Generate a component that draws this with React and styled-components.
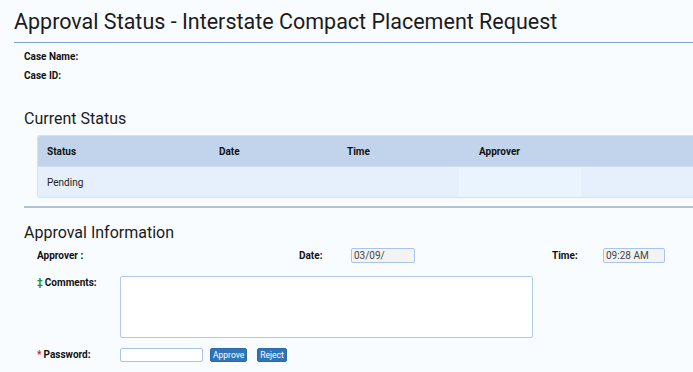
import React from "react";
import styled, { createGlobalStyle } from "styled-components";

const GlobalStyle = createGlobalStyle`
	html, body {
		margin: 0;
		padding: 0;
		background: #f9fcff;
		font-family: Roboto, "Liberation Sans", Arial, sans-serif;
		color: #111;
		overflow: hidden;
	}
`;

const columns = [
	{ key: "status", label: "Status", width: 172 },
	{ key: "date", label: "Date", width: 128 },
	{ key: "time", label: "Time", width: 121 },
	{ key: "approver", label: "Approver", width: 122, indent: 11 },
	{ key: "rest", label: "", width: 140 },
];

const rows = [{ status: "Pending", date: "", time: "", approver: "", rest: "" }];

function App() {
	return (
		<Page>
			<GlobalStyle />
			<Title>Approval Status - Interstate Compact Placement Request</Title>
			<CaseInfo>
				<CaseLabel>Case Name:</CaseLabel>
				<CaseLabel>Case ID:</CaseLabel>
			</CaseInfo>

			<SectionTitle>Current Status</SectionTitle>
			<Table>
				<HeadRow>
					{columns.map((c) => (
						<HeadCell key={c.key} $width={c.width} $indent={c.indent}>
							{c.label}
						</HeadCell>
					))}
				</HeadRow>
				{rows.map((r, i) => (
					<BodyRow key={i}>
						{columns.map((c) => (
							<BodyCell
								key={c.key}
								$width={c.width}
								$indent={c.indent}
								$light={c.key === "approver"}
							>
								{r[c.key]}
							</BodyCell>
						))}
					</BodyRow>
				))}
			</Table>
			<Divider />

			<SectionTitle $tight>Approval Information</SectionTitle>
			<Form>
				<TopRow>
					<FieldLabel $width={262}>Approver :</FieldLabel>
					<FieldLabel $width={52}>Date:</FieldLabel>
					<SmallInput $width={64} defaultValue="03/09/" readOnly />
					<FieldLabel $width={51} $offset={137}>Time:</FieldLabel>
					<SmallInput $width={62} defaultValue="09:28 AM" readOnly />
				</TopRow>
				<CommentRow>
					<FieldLabel $width={83}>
						<Mark $color="#2e8b2e">‡</Mark>Comments:
					</FieldLabel>
					<Comments />
				</CommentRow>
				<ButtonRow>
					<FieldLabel $width={83}>
						<Mark $color="#d42020">*</Mark>Password:
					</FieldLabel>
					<PasswordInput type="password" />
					<Button>Approve</Button>
					<Button>Reject</Button>
				</ButtonRow>
			</Form>
		</Page>
	);
}

const Page = styled.div`
	width: 693px;
	height: 372px;
	padding-top: 7px;
	box-sizing: border-box;
`;

const Title = styled.h1`
	margin: 0 0 0 14px;
	padding-bottom: 5px;
	font-size: 21.5px;
	font-weight: 400;
	line-height: 30px;
	color: #1b1b1b;
	border-bottom: 1px solid #7da2d0;
`;

const CaseInfo = styled.div`
	display: flex;
	flex-direction: column;
	gap: 7px;
	padding: 8px 0 0 24px;
`;

const CaseLabel = styled.div`
	font-size: 10px;
	font-weight: 700;
	line-height: 12px;
`;

const SectionTitle = styled.h2`
	margin: ${(p) => (p.$tight ? "15px" : "27px")} 0 0 24px;
	font-size: 16px;
	font-weight: 400;
	line-height: 20px;
	color: #1b1b1b;
`;

const Table = styled.div`
	margin: 6px 0 0 37px;
	width: 700px;
	border: 1px solid #d5e2f0;
	border-right: none;
	border-radius: 3px 0 0 3px;
	overflow: hidden;
`;

const HeadRow = styled.div`
	display: flex;
	height: 30px;
	align-items: center;
	background: #c1d4ec;
	border-bottom: 1px solid #d0def0;
`;

const BodyRow = styled.div`
	display: flex;
	height: 30px;
	background: #e5f0fc;
`;

const HeadCell = styled.div`
	flex: 0 0 ${(p) => p.$width}px;
	box-sizing: border-box;
	padding-left: ${(p) => 9 + (p.$indent || 0)}px;
	font-size: 10px;
	font-weight: 700;
	color: #111;
`;

const BodyCell = styled.div`
	flex: 0 0 ${(p) => p.$width}px;
	box-sizing: border-box;
	display: flex;
	align-items: center;
	padding-left: ${(p) => 9 + (p.$indent || 0)}px;
	font-size: 10px;
	color: #222;
	background: ${(p) => (p.$light ? "#eaf4ff" : "transparent")};
	margin: ${(p) => (p.$light ? "1px 0 0" : "0")};
`;

const Divider = styled.div`
	margin: 8px 0 0 24px;
	height: 2px;
	background: #b4c1d0;
`;

const Form = styled.div`
	padding-left: 37px;
	margin-top: 4px;
`;

const TopRow = styled.div`
	display: flex;
	align-items: center;
	height: 17px;
`;

const FieldLabel = styled.div`
	flex: 0 0 ${(p) => p.$width}px;
	margin-left: ${(p) => p.$offset || 0}px;
	font-size: 10px;
	font-weight: 700;
	line-height: 12px;
	white-space: nowrap;
`;

const Mark = styled.span`
	color: ${(p) => p.$color};
	margin-right: 2px;
	font-weight: 700;
`;

const SmallInput = styled.input`
	width: ${(p) => p.$width}px;
	height: 15px;
	box-sizing: border-box;
	padding: 0 2px;
	border: 1px solid #a9c3ec;
	border-radius: 2px;
	background: #f3f3f3;
	font-family: Roboto, "Liberation Sans", Arial, sans-serif;
	font-size: 10px;
	color: #444;
	outline: none;
`;

const CommentRow = styled.div`
	display: flex;
	align-items: flex-start;
	margin-top: 12px;
	${FieldLabel} {
		padding-top: 1px;
	}
`;

const Comments = styled.textarea`
	width: 413px;
	height: 62px;
	box-sizing: border-box;
	border: 1px solid #b3c8ec;
	border-radius: 2px;
	background: #fff;
	resize: none;
	outline: none;
	margin: 0;
`;

const ButtonRow = styled.div`
	display: flex;
	align-items: center;
	margin-top: 10px;
	gap: 7px;
	${FieldLabel} {
		margin-right: -7px;
	}
`;

const PasswordInput = styled.input`
	width: 83px;
	height: 14px;
	box-sizing: border-box;
	border: 1px solid #a9c3ec;
	border-radius: 2px;
	background: #fff;
	outline: none;
	margin: 0;
`;

const Button = styled.button`
	height: 14px;
	padding: 0 2px;
	margin-right: 3px;
	border: 1px solid #2a6aa8;
	border-radius: 2px;
	background: #2f74b8;
	color: #fff;
	font-family: Roboto, "Liberation Sans", Arial, sans-serif;
	font-size: 8.5px;
	line-height: 12px;
`;

export default App;
